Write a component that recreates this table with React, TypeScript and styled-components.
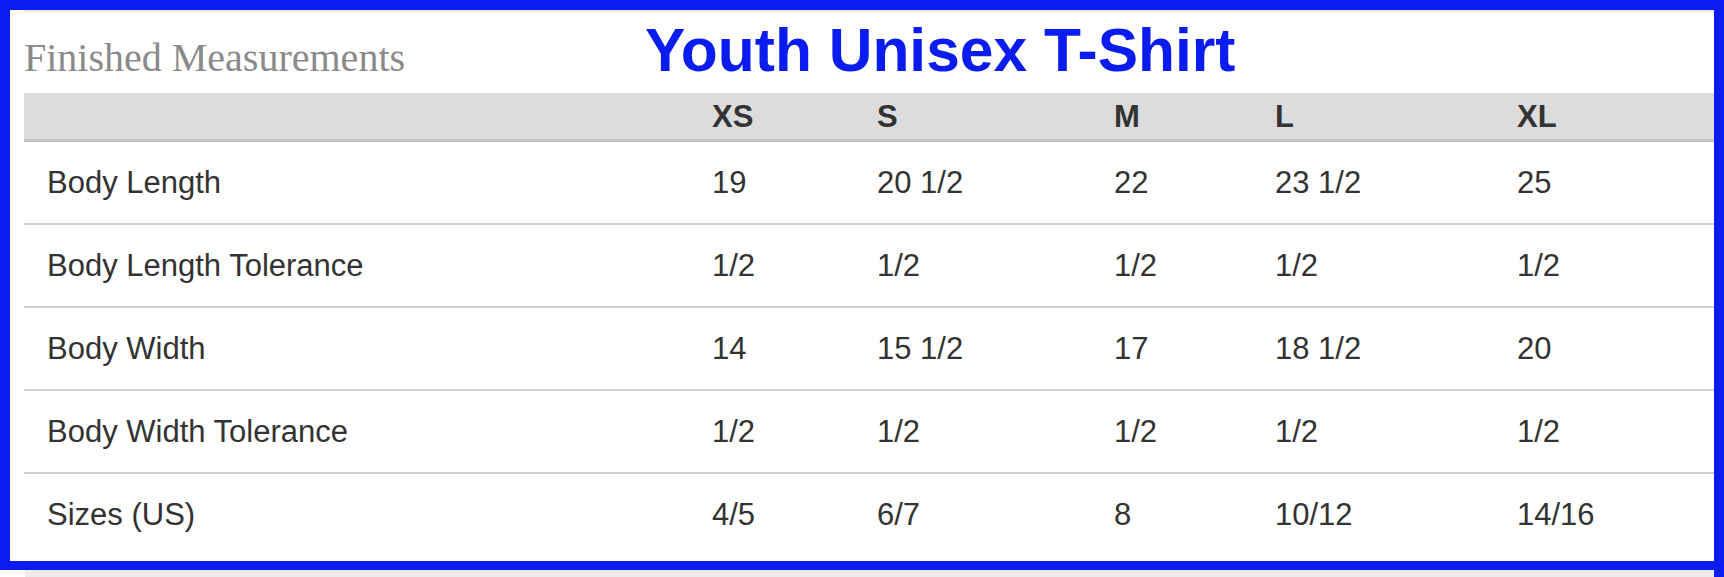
import styled, { createGlobalStyle } from "styled-components";

const GlobalStyle = createGlobalStyle`
  html, body {
    margin: 0;
    padding: 0;
    background: #ffffff;
  }
  body {
    font-family: "Liberation Sans", Arial, sans-serif;
  }
`;

const BLUE = "#0a1cf0";

const Page = styled.div`
  display: flex;
  width: 1724px;
  height: 577px;
  overflow: hidden;
`;

const Main = styled.div`
  flex: 1;
  display: flex;
  flex-direction: column;
`;

const EdgeRight = styled.div`
  width: 10px;
  background: ${BLUE};
`;

const Frame = styled.div`
  border-top: 10px solid ${BLUE};
  border-left: 10px solid ${BLUE};
  border-bottom: 9px solid ${BLUE};
  height: 551px;
  overflow: hidden;
  box-sizing: content-box;
`;

const Under = styled.div`
  height: 7px;
  margin-left: 25px;
  background: #ececec;
`;

const Card = styled.div`
  margin-left: 14px;
  border-top: 2px solid #ececec;
`;

const TitleRow = styled.div`
  display: grid;
  grid-template-columns: 621px 1fr;
  align-items: baseline;
  height: 81px;
`;

const Caption = styled.h2`
  margin: 0;
  padding-top: 24px;
  font-family: "Liberation Serif", "Times New Roman", serif;
  font-weight: normal;
  font-size: 40px;
  line-height: 44px;
  color: #8a8a8a;
`;

const Headline = styled.h1`
  margin: 0;
  font-family: "Liberation Sans", Arial, sans-serif;
  font-weight: bold;
  font-size: 60.5px;
  line-height: 64px;
  color: ${BLUE};
`;

const COLS = "665px 165px 237px 161px 242px 220px";

const HeadRow = styled.div`
  display: grid;
  grid-template-columns: ${COLS};
  align-items: center;
  height: 46px;
  background: #dcdcdc;
  border-bottom: 3px solid #c4c4c4;
`;

const HeadCell = styled.div`
  padding-left: 23px;
  padding-top: 2px;
  font-weight: bold;
  font-size: 31px;
  color: #333333;
`;

const Row = styled.div<{ last?: boolean }>`
  display: grid;
  grid-template-columns: ${COLS};
  align-items: center;
  height: 81px;
  border-bottom: ${({ last }) => (last ? "none" : "2px solid #cfcfcf")};
`;

const Cell = styled.div`
  padding-left: 23px;
  font-size: 31px;
  color: #333333;
`;

const sizes = ["XS", "S", "M", "L", "XL"];

const rows: { label: string; values: string[] }[] = [
  { label: "Body Length", values: ["19", "20 1/2", "22", "23 1/2", "25"] },
  { label: "Body Length Tolerance", values: ["1/2", "1/2", "1/2", "1/2", "1/2"] },
  { label: "Body Width", values: ["14", "15 1/2", "17", "18 1/2", "20"] },
  { label: "Body Width Tolerance", values: ["1/2", "1/2", "1/2", "1/2", "1/2"] },
  { label: "Sizes (US)", values: ["4/5", "6/7", "8", "10/12", "14/16"] },
];

export default function App() {
  return (
    <>
      <GlobalStyle />
      <Page>
        <Main>
          <Frame>
            <Card>
              <TitleRow>
                <Caption>Finished Measurements</Caption>
                <Headline>Youth Unisex T-Shirt</Headline>
              </TitleRow>
              <HeadRow>
                <HeadCell />
                {sizes.map((s) => (
                  <HeadCell key={s}>{s}</HeadCell>
                ))}
              </HeadRow>
              {rows.map((r, i) => (
                <Row key={r.label} last={i === rows.length - 1}>
                  <Cell>{r.label}</Cell>
                  {r.values.map((v, j) => (
                    <Cell key={j}>{v}</Cell>
                  ))}
                </Row>
              ))}
            </Card>
          </Frame>
          <Under />
        </Main>
        <EdgeRight />
      </Page>
    </>
  );
}
